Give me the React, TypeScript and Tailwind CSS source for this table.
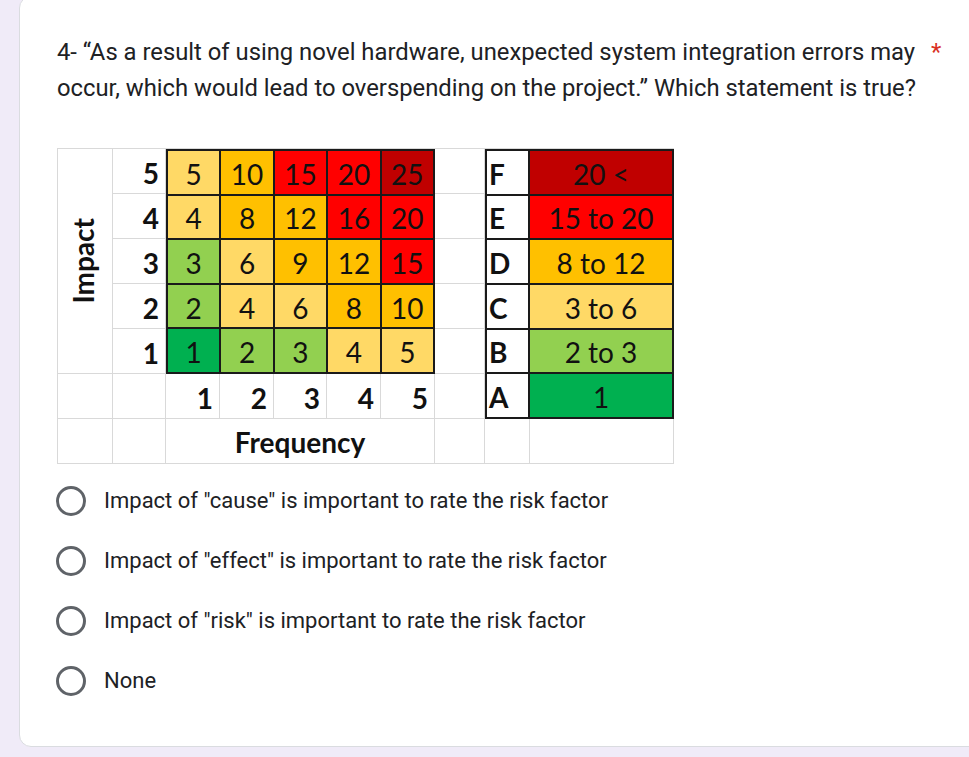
import React from "react";

type Cell = { v: string; c: string };

const C = "bg-[#ffd966]";
const D = "bg-[#ffc000]";
const E = "bg-[#ff0000]";
const F = "bg-[#c00000]";
const B = "bg-[#92d050]";
const A = "bg-[#00b050]";

const matrix: Cell[][] = [
  [{ v: "5", c: C }, { v: "10", c: D }, { v: "15", c: E }, { v: "20", c: E }, { v: "25", c: F }],
  [{ v: "4", c: C }, { v: "8", c: D }, { v: "12", c: D }, { v: "16", c: E }, { v: "20", c: E }],
  [{ v: "3", c: B }, { v: "6", c: C }, { v: "9", c: D }, { v: "12", c: D }, { v: "15", c: E }],
  [{ v: "2", c: B }, { v: "4", c: C }, { v: "6", c: C }, { v: "8", c: D }, { v: "10", c: D }],
  [{ v: "1", c: A }, { v: "2", c: B }, { v: "3", c: B }, { v: "4", c: C }, { v: "5", c: C }],
];

const legend: { l: string; v: string; c: string }[] = [
  { l: "F", v: "20 <", c: F },
  { l: "E", v: "15 to 20", c: E },
  { l: "D", v: "8 to 12", c: D },
  { l: "C", v: "3 to 6", c: C },
  { l: "B", v: "2 to 3", c: B },
  { l: "A", v: "1", c: A },
];

const options = [
  'Impact of "cause" is important to rate the risk factor',
  'Impact of "effect" is important to rate the risk factor',
  'Impact of "risk" is important to rate the risk factor',
  "None",
];

const g = "border-r border-b border-[#d9d9d9]";

function RiskImage() {
  return (
    <div
      className="grid w-[617px] border-l border-t border-[#d9d9d9] bg-white text-[#111] [font-family:Lato,'Open_Sans',sans-serif]"
      style={{
        gridTemplateColumns: "55px 53px 54px 54px 53px 54px 54px 50px 45px 144px",
        gridTemplateRows: "repeat(7, 45px)",
      }}
    >
      <div className={`${g} col-start-1 row-start-1 row-span-5 flex items-center justify-center pr-[4px]`}>
        <span className="rotate-180 text-[28px] font-bold leading-none [writing-mode:vertical-rl]">Impact</span>
      </div>
      <div className={`${g} col-start-1 row-start-6`} />
      <div className={`${g} col-start-1 row-start-7`} />

      {[5, 4, 3, 2, 1].map((n, i) => (
        <div
          key={n}
          className={`${g} col-start-2 flex items-center justify-end pr-[6px] pt-[3px] text-[28px] font-bold leading-none`}
          style={{ gridRowStart: i + 1 }}
        >
          {n}
        </div>
      ))}
      <div className={`${g} col-start-2 row-start-6`} />
      <div className={`${g} col-start-2 row-start-7`} />

      <div className="col-start-3 col-span-5 row-start-1 row-span-5 grid grid-cols-5 grid-rows-5 gap-[2px] border-2 border-[#1a1a1a] bg-[#1a1a1a]">
        {matrix.flat().map((m, i) => (
          <div key={i} className={`${m.c} flex items-center justify-center pt-[3px] text-[28px] leading-none`}>
            {m.v}
          </div>
        ))}
      </div>

      {[1, 2, 3, 4, 5].map((n, i) => (
        <div
          key={n}
          className={`${g} row-start-6 flex items-center justify-end pr-[6px] pt-[3px] text-[28px] font-bold leading-none`}
          style={{ gridColumnStart: i + 3 }}
        >
          {n}
        </div>
      ))}
      <div className={`${g} col-start-3 col-span-5 row-start-7 flex items-center justify-center pt-[2px] text-[28px] font-bold leading-none`}>
        Frequency
      </div>

      {[1, 2, 3, 4, 5, 6, 7].map((r) => (
        <div key={r} className={`${g} col-start-8`} style={{ gridRowStart: r }} />
      ))}

      <div className="col-start-9 col-span-2 row-start-1 row-span-6 grid grid-rows-6 gap-[2px] border-2 border-[#1a1a1a] bg-[#1a1a1a]" style={{ gridTemplateColumns: "41px 1fr" }}>
        {legend.map((r) => (
          <React.Fragment key={r.l}>
            <div className="flex items-center bg-white pl-[2px] pt-[3px] text-[28px] font-bold leading-none">{r.l}</div>
            <div className={`${r.c} flex items-center justify-center pt-[3px] text-[28px] leading-none`}>{r.v}</div>
          </React.Fragment>
        ))}
      </div>
      <div className={`${g} col-start-9 row-start-7`} />
      <div className={`${g} col-start-10 row-start-7`} />
    </div>
  );
}

export default function App() {
  return (
    <div className="h-[757px] w-[969px] overflow-hidden bg-[#f0ebf8] pl-[19px] [font-family:Roboto,Arial,sans-serif]">
      <div className="mt-[-4px] h-[751px] w-[1000px] rounded-[12px] border border-[#dadce0] bg-white pl-[37px] pt-[37px]">
        <div className="flex items-start">
          <div className="w-[871px] text-[23.8px] leading-[36px] text-[#202124]">
            4- “As a result of using novel hardware, unexpected system integration errors may occur, which would lead to overspending on the project.” Which statement is true?
          </div>
          <span className="pl-[3px] text-[24px] leading-[36px] text-[#d93025]">*</span>
        </div>

        <div className="mt-[42px]">
          <RiskImage />
        </div>

        <div className="mt-[7px] flex flex-col">
          {options.map((o) => (
            <div key={o} className="flex h-[60px] items-center">
              <div className="-ml-[1px] h-[30px] w-[30px] shrink-0 rounded-full border-[3px] border-[#5f6368]" />
              <span className="ml-[18px] text-[22px] leading-[30px] text-[#202124]">{o}</span>
            </div>
          ))}
        </div>
      </div>
    </div>
  );
}
